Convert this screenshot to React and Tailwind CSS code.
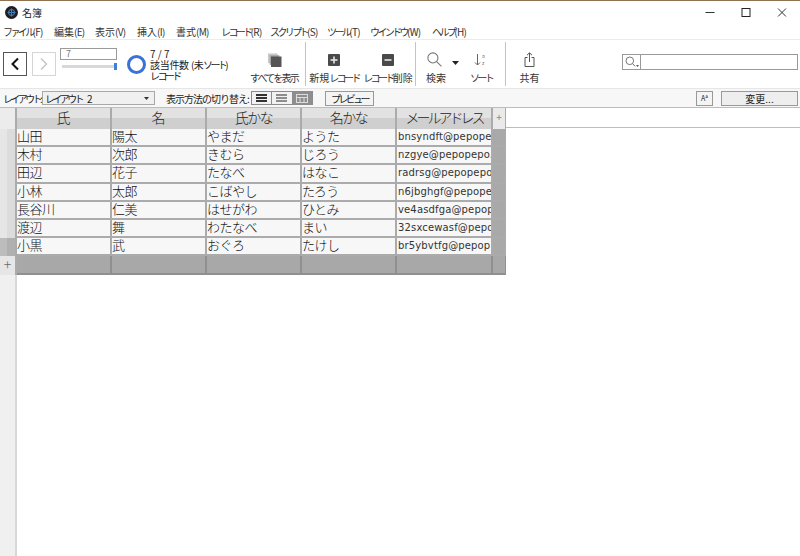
import React from 'react';

const JP = "font-['Noto_Sans_CJK_JP','Noto_Sans',sans-serif]";

// kana in the original UI font is much narrower than in Noto
const K = ({ children }) => <span className="tracking-[-2.6px]">{children}</span>;
const P = ({ children }) => <span className="tracking-[-0.7px]">{children}</span>;

const menus = [
  [<K>ファイル</K>, '(F)', 'w-[51px]'],
  ['編集', '(E)', 'w-[41px]'],
  ['表示', '(V)', 'w-[42px]'],
  ['挿入', '(I)', 'w-[39px]'],
  ['書式', '(M)', 'w-[45px]'],
  [<K>レコード</K>, '(R)', 'w-[49px]'],
  [<K>スクリプト</K>, '(S)', 'w-[57px]'],
  [<K>ツール</K>, '(T)', 'w-[43px]'],
  [<K>ウインドウ</K>, '(W)', 'w-[62px]'],
  [<K>ヘルプ</K>, '(H)', 'w-[50px]'],
];

const columns = [
  ['氏', ''],
  ['名', ''],
  ['氏かな', 'tracking-[-1.5px]'],
  ['名かな', 'tracking-[-1.5px]'],
  ['メールアドレス', 'tracking-[-3px]'],
];

const rows = [
  ['山田', '陽太', 'やまだ', 'ようた', 'bnsyndft@pepope'],
  ['木村', '次郎', 'きむら', 'じろう', 'nzgye@pepopepo.'],
  ['田辺', '花子', 'たなべ', 'はなこ', 'radrsg@pepopepo'],
  ['小林', '太郎', 'こばやし', 'たろう', 'n6jbghgf@pepope'],
  ['長谷川', '仁美', 'はせがわ', 'ひとみ', 've4asdfga@pepop'],
  ['渡辺', '舞', 'わたなべ', 'まい', '32sxcewasf@pepo'],
  ['小黒', '武', 'おぐろ', 'たけし', 'br5ybvtfg@pepop'],
];

const ToolButton = ({ label, width, labelClass, children }) => (
  <div className={`flex flex-col items-center h-full pt-[9px] ${width}`}>
    <div className="h-[21px] flex items-center justify-center">{children}</div>
    <span className={`text-[10px] leading-[14px] mt-[1px] text-[#333] whitespace-nowrap ${labelClass || ''}`}>{label}</span>
  </div>
);

const Divider = () => <div className="w-px h-[44px] bg-[#c4c4c4] shrink-0" />;

const SquareIcon = ({ minus }) => (
  <svg width="12" height="12" viewBox="0 0 12 12">
    <rect width="12" height="12" rx="1" fill="#4a4a4a" />
    <rect x="2.5" y="5.2" width="7" height="1.6" fill="#e8e8e8" />
    {!minus && <rect x="5.2" y="2.5" width="1.6" height="7" fill="#e8e8e8" />}
  </svg>
);

const App = () => {
  return (
    <div className={`w-[800px] h-[556px] bg-white overflow-hidden flex flex-col text-[#222] ${JP}`}>
      {/* title bar */}
      <div className="h-[24px] shrink-0 border-t border-[#8f7350] flex items-center pl-[5px]">
        <svg width="13" height="13" viewBox="0 0 13 13">
          <circle cx="6.5" cy="6.5" r="6.5" fill="#1d1d22" />
          <circle cx="6.5" cy="6.5" r="3" fill="none" stroke="#4f8fd0" strokeWidth="1" />
          <path d="M6.5 2.5v8M2.5 6.5h8" stroke="#3f7fc0" strokeWidth="1" />
        </svg>
        <span className="text-[10px] ml-[4px] text-[#222]">名簿</span>
        <div className="ml-auto flex items-center h-full">
          <svg width="36" height="23" viewBox="0 0 36 23">
            <path d="M13.5 11.5h9" stroke="#333" strokeWidth="1" />
          </svg>
          <svg width="36" height="23" viewBox="0 0 36 23">
            <rect x="14" y="7.5" width="8" height="8" fill="none" stroke="#222" strokeWidth="1" />
          </svg>
          <svg width="36" height="23" viewBox="0 0 36 23">
            <path d="M14 7.5l8 8M22 7.5l-8 8" stroke="#333" strokeWidth="1" />
          </svg>
        </div>
      </div>

      {/* menu */}
      <div className="h-[16px] shrink-0 flex pl-[3px] items-center">
        {menus.map(([name, key, w]) => (
          <span key={key} className={`text-[10px] leading-[16px] text-[#333] whitespace-nowrap ${w}`}>
            {name}<P>{key}</P>
          </span>
        ))}
      </div>

      {/* toolbar */}
      <div className="h-[49px] shrink-0 mt-[-1px] border-t border-[#ececec] flex items-center">
        <div className="w-[24px] h-[24px] ml-[3px] border border-[#555] bg-white flex items-center justify-center">
          <svg width="10" height="14" viewBox="0 0 10 14"><path d="M8 1.5L2.5 7 8 12.5" fill="none" stroke="#111" strokeWidth="2" /></svg>
        </div>
        <div className="w-[24px] h-[24px] ml-[5px] border border-[#d5d5d5] bg-white flex items-center justify-center">
          <svg width="10" height="14" viewBox="0 0 10 14"><path d="M2 1.5L7.5 7 2 12.5" fill="none" stroke="#c4c4c4" strokeWidth="1.4" /></svg>
        </div>
        <div className="ml-[4px] w-[57px] flex flex-col self-start mt-[8px]">
          <div className="h-[12px] border border-[#9a9a9a] text-[9px] leading-[10px] pl-[5px] text-[#777]">7</div>
          <div className="relative h-[6px] mt-[3px] ml-[2px]">
            <div className="h-[3px] mt-[2px] bg-[#d8d8d8]" />
            <div className="absolute right-0 top-0 w-[3px] h-[7px] bg-[#3f7fd8]" />
          </div>
        </div>
        <div className="ml-[10px] w-[19px] h-[19px] rounded-full border-[3px] border-[#3a72d6] shrink-0" />
        <div className="ml-[4px] w-[100px] flex flex-col self-start mt-[8px] text-[10px] leading-[11px] text-[#222] whitespace-nowrap">
          <span>7 / 7</span>
          <span><span className="tracking-[-0.3px]">該当件数</span> <P>(未</P><K>ソート</K><P>)</P></span>
          <K>レコード</K>
        </div>
        <ToolButton label="すべてを表示" width="w-[50px] ml-[-1px]" labelClass="tracking-[-1.8px]">
          <svg width="15" height="14" viewBox="0 0 16 16">
            <rect x="0.5" y="0.5" width="11" height="11" fill="#c9c9c9" />
            <rect x="2.5" y="2.5" width="11" height="11" fill="#a5a5a5" />
            <rect x="4" y="4" width="12" height="12" fill="#555" />
          </svg>
        </ToolButton>
        <div className="w-[6px]" />
        <Divider />
        <ToolButton label={<>新規<K>レコード</K></>} width="w-[56px]"><SquareIcon /></ToolButton>
        <ToolButton label={<><K>レコード</K>削除</>} width="w-[52px]"><SquareIcon minus /></ToolButton>
        <div className="w-px" />
        <Divider />
        <ToolButton label="検索" width="w-[33px] items-start pl-[10px]">
          <svg width="15" height="15" viewBox="0 0 14 14" className="ml-px">
            <circle cx="5.5" cy="5.5" r="4.7" fill="none" stroke="#777" strokeWidth="1" />
            <path d="M9 9l4.5 4.5" stroke="#777" strokeWidth="1" />
          </svg>
        </ToolButton>
        <svg width="7" height="4" viewBox="0 0 7 4" className="ml-[3px] mt-[-2px]"><path d="M0 0h7L3.5 4z" fill="#222" /></svg>
        <ToolButton label={<K>ソート</K>} width="w-[48px] ml-[-2px]">
          <svg width="14" height="14" viewBox="0 0 14 14">
            <path d="M3.5 1v11M1 9.5L3.5 12 6 9.5" fill="none" stroke="#666" strokeWidth="1" />
            <text x="8" y="5" fontSize="5" fill="#666">a</text>
            <text x="8" y="12" fontSize="5" fill="#666">z</text>
          </svg>
        </ToolButton>
        <Divider />
        <ToolButton label="共有" width="w-[47px]">
          <svg width="11" height="15" viewBox="0 0 11 15">
            <path d="M3.5 5.5H1v9h9v-9H7.5M5.5 10V1M3 3.2L5.5 0.8 8 3.2" fill="none" stroke="#555" strokeWidth="1" />
          </svg>
        </ToolButton>
        <div className="ml-[69px] w-[176px] h-[16px] border border-[#999] flex mt-[-5px]">
          <div className="w-[18px] border-r border-[#999] flex items-center pl-[2px]">
            <svg width="14" height="12" viewBox="0 0 14 12">
              <circle cx="4.8" cy="4.8" r="3.8" fill="none" stroke="#777" strokeWidth="1" />
              <path d="M7.6 7.6l2.6 2.8" stroke="#777" strokeWidth="1" />
              <path d="M11 9h3l-1.5 2z" fill="#555" />
            </svg>
          </div>
        </div>
      </div>

      {/* layout bar */}
      <div className="h-[20px] shrink-0 bg-[#f7f7f7] border-t border-[#e6e6e6] border-b border-b-[#bdbdbd] flex items-center">
        <span className="text-[10px] ml-[3px] text-[#222] whitespace-nowrap w-[39px]"><K>レイアウト</K>:</span>
        <div className="w-[113px] h-[14px] bg-[#f0f0f0] border border-[#a8a8a8] flex items-center text-[10px] pl-[2px] whitespace-nowrap">
          <K>レイアウト</K>
          <span className="ml-[5px]">2</span>
          <svg width="5" height="3" viewBox="0 0 5 3" className="ml-auto mr-[5px]"><path d="M0 0h5L2.5 3z" fill="#333" /></svg>
        </div>
        <span className="text-[10px] ml-[11px] text-[#222] whitespace-nowrap w-[85px] tracking-[-1px]">表示方法の切り替え:</span>
        <div className="flex h-[14px] w-[62px] border border-[#8c8c8c]">
          <div className="flex-1 bg-[#f2f2f2] border-r border-[#8c8c8c] flex flex-col justify-center items-center gap-px">
            <div className="w-[11px] h-[2px] bg-[#333]" /><div className="w-[11px] h-[2px] bg-[#333]" /><div className="w-[11px] h-[2px] bg-[#333]" />
          </div>
          <div className="flex-1 bg-[#f2f2f2] border-r border-[#8c8c8c] flex flex-col justify-center items-center gap-px">
            <div className="w-[11px] h-[2px] bg-[#8d8d8d]" /><div className="w-[11px] h-[2px] bg-[#8d8d8d]" /><div className="w-[11px] h-[2px] bg-[#8d8d8d]" />
          </div>
          <div className="flex-1 bg-[#8e8e8e] flex items-center justify-center">
            <svg width="12" height="9" viewBox="0 0 12 9">
              <rect x="0.5" y="0.5" width="11" height="8" fill="none" stroke="#ddd" />
              <path d="M0 3.5h12M4 3.5V9M8 3.5V9" stroke="#ddd" strokeWidth="1" />
            </svg>
          </div>
        </div>
        <div className="ml-[12px] w-[49px] h-[15px] border border-[#999] bg-[#f4f4f4] text-[10px] leading-[13px] text-center whitespace-nowrap"><K>プレビュー</K></div>
        <div className="ml-[322px] w-[17px] h-[15px] border border-[#999] bg-[#f4f4f4] text-[7px] leading-[13px] text-center">Aª</div>
        <div className="ml-[8px] w-[77px] h-[15px] border border-[#999] bg-[#eeeeee] text-[10px] leading-[13px] text-center">変更...</div>
      </div>

      {/* table */}
      <div className="flex items-start shrink-0">
        <div className="grid grid-cols-[17px_95px_95px_95px_95px_96px_13px] grid-rows-[21px_repeat(7,18.2px)_19px] w-[506px]">
          <div className="bg-[#ececec] border-r-2 border-[#ababab]" />
          {columns.map(([c, t]) => (
            <div key={c} className={`bg-gradient-to-b from-[#e2e2e2] from-50% to-[#cfcfcf] to-50% border-r-2 border-[#ababab] text-[14px] leading-[19px] text-center text-[#222] font-light whitespace-nowrap ${t}`}>{c}</div>
          ))}
          <div className="bg-[#eaeaea] border-r border-[#ababab] text-[10px] leading-[18px] text-center text-[#888]">+</div>

          {rows.map((r, i) => (
            <React.Fragment key={r[0]}>
              <div className={`border-r-2 border-[#ababab] bg-gradient-to-r from-45% to-45% ${i === 6 ? 'from-[#bcbcbc] to-[#b0b0b0]' : 'from-[#e6e6e6] to-[#dcdcdc]'}`} />
              {r.map((v, j) => (
                <div
                  key={j}
                  className={`bg-[#f7f7f7] border-r-2 border-b-2 border-[#ababab] whitespace-nowrap ${
                    j === 4 ? "overflow-hidden leading-[14px] text-[10px] tracking-[0.15px] font-['DejaVu_Sans',sans-serif] text-[#333] pl-px pt-px" : 'leading-[13px] text-[13px] tracking-[-0.5px] font-light text-[#111]'
                  }`}
                >
                  {v}
                </div>
              ))}
              <div className="bg-[#a9a9a9] border-r border-b-2 border-[#ababab]" />
            </React.Fragment>
          ))}

          <div className="bg-[#e6e6e6] border-r-2 border-[#ababab] text-[14px] leading-[17px] text-center text-[#666] font-light">+</div>
          {[0, 1, 2, 3, 4].map((k) => (
            <div key={k} className="bg-[#a8a8a8] border-r-2 border-b-2 border-[#909090]" />
          ))}
          <div className="bg-[#a8a8a8] border-r border-b-2 border-[#909090]" />
        </div>
        <div className="flex-1 h-[20px] border-b border-[#bdbdbd]" />
      </div>

      {/* left gutter under the table */}
      <div className="flex-1 w-[17px] bg-[#f0f0f0] border-r-2 border-[#d8d8d8]" />
    </div>
  );
};

export default App;
